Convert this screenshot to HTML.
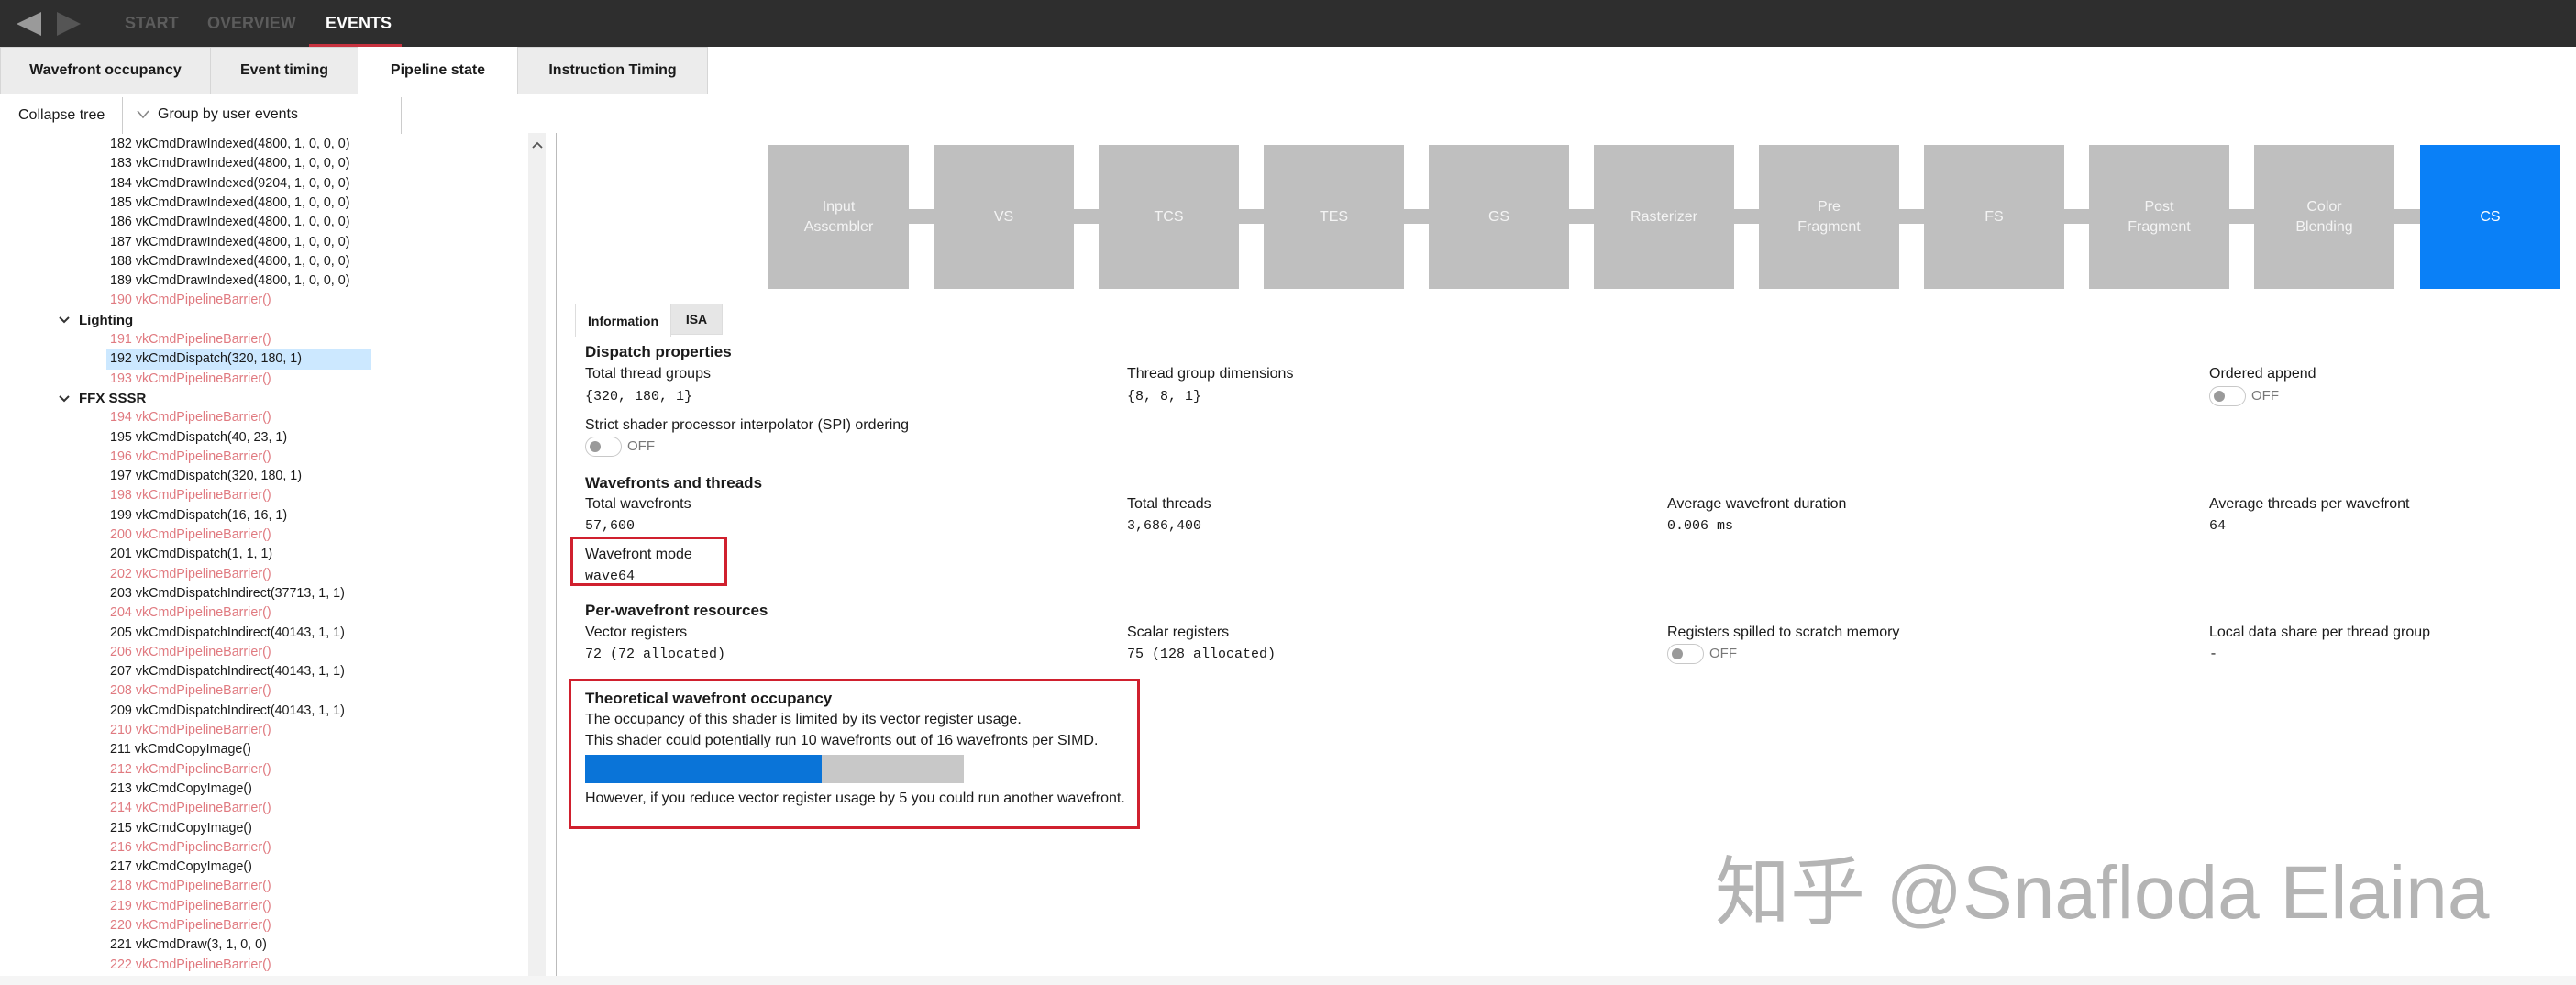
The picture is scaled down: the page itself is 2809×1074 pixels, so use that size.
<!DOCTYPE html>
<html><head><meta charset="utf-8"><style>
*{margin:0;padding:0;box-sizing:border-box}
body{width:2809px;height:1074px;position:relative;background:#fff;font-family:"Liberation Sans",sans-serif;color:#1a1a1a;overflow:hidden}
.a{position:absolute;white-space:nowrap}
.top{left:0;top:0;width:2809px;height:51px;background:#2e2e2e}
.nav{font-weight:bold;font-size:18px;top:15px;color:#5c5c5c}
.tab{top:51px;height:52px;background:#ececec;border:1px solid #d6d6d6;font-weight:bold;font-size:16px;display:flex;align-items:center;justify-content:center}
.tr{font-size:14.3px;left:120px;line-height:21.3px;height:21.3px}
.r{color:#e07a80}
.hd{font-weight:bold;font-size:15px;left:86px}
.c{font-size:16px}
.m{font-family:"Liberation Mono",monospace;font-size:15px}
.h{font-weight:bold;font-size:17px}
.box{top:158px;width:153px;height:157px;background:#bfbfbf;color:#f4f4f4;font-size:16px;display:flex;align-items:center;justify-content:center;text-align:center;line-height:22px}
.tg{width:40px;height:22px;border:1px solid #c8c8c8;border-radius:11px;background:#fff}
.tg:after{content:"";position:absolute;left:4px;top:4px;width:12px;height:12px;border-radius:50%;background:#9a9a9a}
.off{font-size:15px;color:#777}
</style></head><body>
<div class="a top"></div>
<svg class="a" style="left:18px;top:13px" width="72" height="27"><polygon points="27,0 27,26 0,13" fill="#9a9a9a"/><polygon points="44,0 44,26 70,13" fill="#555"/></svg>
<div class="a nav" style="left:136px">START</div>
<div class="a nav" style="left:226px">OVERVIEW</div>
<div class="a nav" style="left:355px;color:#fff">EVENTS</div>
<div class="a" style="left:337px;top:48px;width:101px;height:3px;background:#c8323f"></div>

<div class="a tab" style="left:0;width:230px">Wavefront occupancy</div>
<div class="a tab" style="left:229px;width:162px">Event timing</div>
<div class="a tab" style="left:390px;width:175px;background:#fff;border-color:#fff">Pipeline state</div>
<div class="a tab" style="left:564px;width:208px">Instruction Timing</div>

<div class="a" style="left:20px;top:117px;font-size:16px">Collapse tree</div>
<div class="a" style="left:133px;top:106px;width:1px;height:40px;background:#ccc"></div>
<svg class="a" style="left:149px;top:120px" width="14" height="10"><path d="M1 1 L7 8 L13 1" stroke="#888" stroke-width="1.6" fill="none"/></svg>
<div class="a" style="left:172px;top:116px;font-size:16px">Group by user events</div>
<div class="a" style="left:437px;top:106px;width:1px;height:40px;background:#ccc"></div>

<div class="a" style="left:576px;top:145px;width:19px;height:920px;background:#f0f0f0"></div>
<svg class="a" style="left:580px;top:154px" width="12" height="8"><path d="M1 7 L6 2 L11 7" stroke="#555" stroke-width="1.8" fill="none"/></svg>
<div class="a" style="left:606px;top:145px;width:1px;height:920px;background:#bbb"></div>

<div class="a" style="left:116px;top:381px;width:289px;height:22px;background:#cce8ff"></div>
<div class="a" style="left:0;top:147px">
<div class="a tr" style="top:0">182 vkCmdDrawIndexed(4800, 1, 0, 0, 0)</div>
<div class="a tr" style="top:21.3px">183 vkCmdDrawIndexed(4800, 1, 0, 0, 0)</div>
<div class="a tr" style="top:42.6px">184 vkCmdDrawIndexed(9204, 1, 0, 0, 0)</div>
<div class="a tr" style="top:63.9px">185 vkCmdDrawIndexed(4800, 1, 0, 0, 0)</div>
<div class="a tr" style="top:85.2px">186 vkCmdDrawIndexed(4800, 1, 0, 0, 0)</div>
<div class="a tr" style="top:106.5px">187 vkCmdDrawIndexed(4800, 1, 0, 0, 0)</div>
<div class="a tr" style="top:127.8px">188 vkCmdDrawIndexed(4800, 1, 0, 0, 0)</div>
<div class="a tr" style="top:149.1px">189 vkCmdDrawIndexed(4800, 1, 0, 0, 0)</div>
<div class="a tr r" style="top:170.4px">190 vkCmdPipelineBarrier()</div>
<div class="a tr hd" style="top:191.7px">Lighting</div>
<div class="a tr r" style="top:213px">191 vkCmdPipelineBarrier()</div>
<div class="a tr" style="top:234.3px">192 vkCmdDispatch(320, 180, 1)</div>
<div class="a tr r" style="top:255.6px">193 vkCmdPipelineBarrier()</div>
<div class="a tr hd" style="top:276.9px">FFX SSSR</div>
<div class="a tr r" style="top:298.2px">194 vkCmdPipelineBarrier()</div>
<div class="a tr" style="top:319.5px">195 vkCmdDispatch(40, 23, 1)</div>
<div class="a tr r" style="top:340.8px">196 vkCmdPipelineBarrier()</div>
<div class="a tr" style="top:362.1px">197 vkCmdDispatch(320, 180, 1)</div>
<div class="a tr r" style="top:383.4px">198 vkCmdPipelineBarrier()</div>
<div class="a tr" style="top:404.7px">199 vkCmdDispatch(16, 16, 1)</div>
<div class="a tr r" style="top:426px">200 vkCmdPipelineBarrier()</div>
<div class="a tr" style="top:447.3px">201 vkCmdDispatch(1, 1, 1)</div>
<div class="a tr r" style="top:468.6px">202 vkCmdPipelineBarrier()</div>
<div class="a tr" style="top:489.9px">203 vkCmdDispatchIndirect(37713, 1, 1)</div>
<div class="a tr r" style="top:511.2px">204 vkCmdPipelineBarrier()</div>
<div class="a tr" style="top:532.5px">205 vkCmdDispatchIndirect(40143, 1, 1)</div>
<div class="a tr r" style="top:553.8px">206 vkCmdPipelineBarrier()</div>
<div class="a tr" style="top:575.1px">207 vkCmdDispatchIndirect(40143, 1, 1)</div>
<div class="a tr r" style="top:596.4px">208 vkCmdPipelineBarrier()</div>
<div class="a tr" style="top:617.7px">209 vkCmdDispatchIndirect(40143, 1, 1)</div>
<div class="a tr r" style="top:639px">210 vkCmdPipelineBarrier()</div>
<div class="a tr" style="top:660.3px">211 vkCmdCopyImage()</div>
<div class="a tr r" style="top:681.6px">212 vkCmdPipelineBarrier()</div>
<div class="a tr" style="top:702.9px">213 vkCmdCopyImage()</div>
<div class="a tr r" style="top:724.2px">214 vkCmdPipelineBarrier()</div>
<div class="a tr" style="top:745.5px">215 vkCmdCopyImage()</div>
<div class="a tr r" style="top:766.8px">216 vkCmdPipelineBarrier()</div>
<div class="a tr" style="top:788.1px">217 vkCmdCopyImage()</div>
<div class="a tr r" style="top:809.4px">218 vkCmdPipelineBarrier()</div>
<div class="a tr r" style="top:830.7px">219 vkCmdPipelineBarrier()</div>
<div class="a tr r" style="top:852px">220 vkCmdPipelineBarrier()</div>
<div class="a tr" style="top:873.3px">221 vkCmdDraw(3, 1, 0, 0)</div>
<div class="a tr r" style="top:894.6px">222 vkCmdPipelineBarrier()</div>
</div>
<svg class="a" style="left:64px;top:345px" width="12" height="8"><path d="M1 1 L6 6 L11 1" stroke="#333" stroke-width="2" fill="none"/></svg>
<svg class="a" style="left:64px;top:431px" width="12" height="8"><path d="M1 1 L6 6 L11 1" stroke="#333" stroke-width="2" fill="none"/></svg>

<div class="a" style="left:838px;top:228px;width:1950px;height:16px;background:#bfbfbf"></div>
<div class="a box" style="left:838px">Input<br>Assembler</div>
<div class="a box" style="left:1018px">VS</div>
<div class="a box" style="left:1198px">TCS</div>
<div class="a box" style="left:1378px">TES</div>
<div class="a box" style="left:1558px">GS</div>
<div class="a box" style="left:1738px">Rasterizer</div>
<div class="a box" style="left:1918px">Pre<br>Fragment</div>
<div class="a box" style="left:2098px">FS</div>
<div class="a box" style="left:2278px">Post<br>Fragment</div>
<div class="a box" style="left:2458px">Color<br>Blending</div>
<div class="a box" style="left:2639px;background:#0a80f7;color:#fff">CS</div>

<div class="a" style="left:627px;top:331px;width:105px;height:36px;border:1px solid #ddd;border-bottom:none;background:#fff;font-weight:bold;font-size:14px;display:flex;align-items:center;justify-content:center">Information</div>
<div class="a" style="left:731px;top:331px;width:57px;height:34px;background:#e6e6e6;border:1px solid #ddd;font-weight:bold;font-size:14px;display:flex;align-items:center;justify-content:center">ISA</div>

<div class="a h" style="left:638px;top:374px">Dispatch properties</div>
<div class="a c" style="left:638px;top:399px">Total thread groups</div>
<div class="a m" style="left:638px;top:424px">{320, 180, 1}</div>
<div class="a c" style="left:1229px;top:399px">Thread group dimensions</div>
<div class="a m" style="left:1229px;top:424px">{8, 8, 1}</div>
<div class="a c" style="left:2409px;top:399px">Ordered append</div>
<div class="a tg" style="left:2409px;top:421px"></div><div class="a off" style="left:2455px;top:423px">OFF</div>
<div class="a c" style="left:638px;top:455px">Strict shader processor interpolator (SPI) ordering</div>
<div class="a tg" style="left:638px;top:476px"></div><div class="a off" style="left:684px;top:478px">OFF</div>

<div class="a h" style="left:638px;top:517px">Wavefronts and threads</div>
<div class="a c" style="left:638px;top:541px">Total wavefronts</div>
<div class="a m" style="left:638px;top:565px">57,600</div>
<div class="a c" style="left:1229px;top:541px">Total threads</div>
<div class="a m" style="left:1229px;top:565px">3,686,400</div>
<div class="a c" style="left:1818px;top:541px">Average wavefront duration</div>
<div class="a m" style="left:1818px;top:565px">0.006 ms</div>
<div class="a c" style="left:2409px;top:541px">Average threads per wavefront</div>
<div class="a m" style="left:2409px;top:565px">64</div>
<div class="a" style="left:622px;top:585px;width:171px;height:54px;border:3px solid #d0202e"></div>
<div class="a c" style="left:638px;top:596px">Wavefront mode</div>
<div class="a m" style="left:638px;top:620px">wave64</div>

<div class="a h" style="left:638px;top:656px">Per-wavefront resources</div>
<div class="a c" style="left:638px;top:681px">Vector registers</div>
<div class="a m" style="left:638px;top:705px">72 (72 allocated)</div>
<div class="a c" style="left:1229px;top:681px">Scalar registers</div>
<div class="a m" style="left:1229px;top:705px">75 (128 allocated)</div>
<div class="a c" style="left:1818px;top:681px">Registers spilled to scratch memory</div>
<div class="a tg" style="left:1818px;top:702px"></div><div class="a off" style="left:1864px;top:704px">OFF</div>
<div class="a c" style="left:2409px;top:681px">Local data share per thread group</div>
<div class="a m" style="left:2409px;top:705px">-</div>

<div class="a" style="left:620px;top:740px;width:623px;height:164px;border:3px solid #d0202e"></div>
<div class="a h" style="left:638px;top:752px">Theoretical wavefront occupancy</div>
<div class="a c" style="left:638px;top:776px">The occupancy of this shader is limited by its vector register usage.</div>
<div class="a c" style="left:638px;top:799px">This shader could potentially run 10 wavefronts out of 16 wavefronts per SIMD.</div>
<div class="a" style="left:638px;top:823px;width:258px;height:31px;background:#0a74d8"></div>
<div class="a" style="left:896px;top:823px;width:155px;height:31px;background:#c8c8c8"></div>
<div class="a c" style="left:638px;top:862px">However, if you reduce vector register usage by 5 you could run another wavefront.</div>

<div class="a" style="left:1870px;top:906px;font-size:82px;color:#b4b4b4;font-family:'Liberation Sans','Noto Sans CJK SC',sans-serif">知乎 @Snafloda Elaina</div>
<div class="a" style="left:0;top:1064px;width:2809px;height:10px;background:#f5f5f5"></div>
</body></html>
